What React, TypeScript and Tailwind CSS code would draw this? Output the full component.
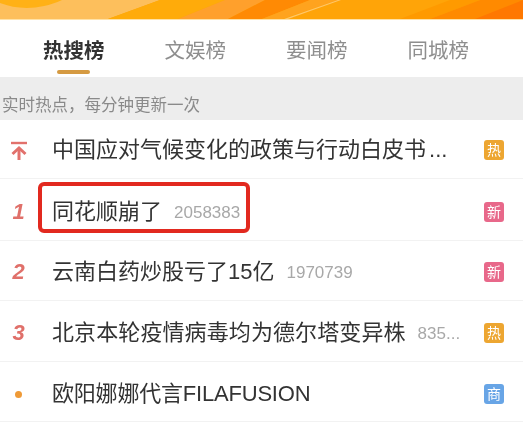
import React from 'react';

const FONT = '"Liberation Sans", "Noto Sans CJK SC", sans-serif';

type Row = {
  rank: 'top' | 'dot' | string;
  title: string;
  titleClass?: string;
  dots?: boolean;
  count?: string;
  tag: string;
  tagClass: string;
  box?: boolean;
  rowClass: string;
};

const rows: Row[] = [
  { rank: 'top', title: '中国应对气候变化的政策与行动白皮书', dots: true, tag: '热', tagClass: 'bg-[#eda631]', rowClass: 'h-[59px] pt-[2px]' },
  { rank: '1', title: '同花顺崩了', count: '2058383', tag: '新', tagClass: 'bg-[#e8688a]', box: true, rowClass: 'h-[62px] pt-[5px]' },
  { rank: '2', title: '云南白药炒股亏了15亿', count: '1970739', tag: '新', tagClass: 'bg-[#e8688a]', rowClass: 'h-[60px] pt-[3px]' },
  { rank: '3', title: '北京本轮疫情病毒均为德尔塔变异株', titleClass: 'tracking-[0.1px]', count: '835...', tag: '热', tagClass: 'bg-[#eda631]', rowClass: 'h-[61px] pt-[4px]' },
  { rank: 'dot', title: '欧阳娜娜代言FILAFUSION', titleClass: 'tracking-[-0.2px]', tag: '商', tagClass: 'bg-[#68a5e6]', rowClass: 'h-[60px] pt-[5px]' },
];

const tabs = ['热搜榜', '文娱榜', '要闻榜', '同城榜'];

function PinIcon() {
  return (
    <svg width="18" height="19" viewBox="0 0 18 19" fill="none" stroke="#e2716c" strokeWidth="3">
      <path d="M1 2h16" strokeWidth="2.4" />
      <path d="M9 19V8" />
      <path d="M2.5 13 9 7l6.5 6" />
    </svg>
  );
}

function Rank({ rank }: { rank: string }) {
  if (rank === 'top') return <PinIcon />;
  if (rank === 'dot') return <span className="block w-[7px] h-[7px] rounded-full bg-[#ef9a37]" />;
  return <span className="text-[22px] leading-none font-bold italic text-[#e0706a]">{rank}</span>;
}

export default function App() {
  return (
    <div className="w-[523px] h-[423px] overflow-hidden bg-white blur-[0.7px]" style={{ fontFamily: FONT }}>
      {/* Orange header strip */}
      <div className="h-[20px] overflow-hidden bg-[#ffa408] border-b border-[#ffe2a8]">
        <svg width="523" height="19" viewBox="0 0 523 19" className="block">
          <path d="M0 0h160L108 19H0z" fill="#fdbf5c" />
          <path d="M0 0h62C40 10 18 10 0 3z" fill="#ffb116" />
          <path d="M108 19 160 0h65l-47 19z" fill="#ffab0a" />
          <path d="M178 19 225 0h40l-37 19z" fill="#ffa02c" />
          <path d="M228 19 265 0h45l-48 19z" fill="#ff8a04" />
          <path d="M262 19 310 0h28L282 19z" fill="#ffa31e" />
          <path d="M284 19 338 0h3L288 19z" fill="#ffc66a" />
          <path d="M400 19 450 0h30L430 19z" fill="#ff9a00" />
          <path d="M430 19 480 0h43v19z" fill="#ff8a00" />
          <path d="M475 19 523 0v19z" fill="#ff7800" />
        </svg>
      </div>

      {/* Tabs */}
      <div className="h-[57px] flex pl-[43px] gap-[60px] text-[20.5px] leading-none text-[#8e8e8e]">
        {tabs.map((tab, i) => (
          <div key={tab} className="relative pt-[21px]">
            <span className={i === 0 ? 'font-bold text-[#333333]' : ''}>{tab}</span>
            {i === 0 && (
              <span className="absolute left-[14px] top-[50px] w-[33px] h-[4px] rounded-full bg-[#d59a42]" />
            )}
          </div>
        ))}
      </div>

      {/* Notice */}
      <div className="h-[43px] bg-[#ededed] pl-[2px] pt-[19px] text-[16.5px] leading-[18px] text-[#8a8a8a]">
        实时热点{'\uFF0C'}每分钟更新一次
      </div>

      {/* List */}
      {rows.map((row) => (
        <div key={row.title} className={`relative flex items-center border-b border-[#f2f2f2] ${row.rowClass}`}>
          <div className="w-[52px] shrink-0 flex justify-center pr-[15px]">
            <Rank rank={row.rank} />
          </div>
          <span className={`text-[22px] leading-none text-[#333333] whitespace-nowrap ${row.titleClass ?? ''}`}>{row.title}</span>
          {row.dots && <span className="ml-[3px] text-[22px] leading-none text-[#333333]">...</span>}
          {row.count && <span className="ml-[12px] text-[17px] leading-none text-[#a8a8a8]">{row.count}</span>}
          <span className={`ml-auto mr-[19px] w-[20px] h-[20px] rounded-[3px] flex items-center justify-center text-[14px] leading-none text-white ${row.tagClass}`}>
            {row.tag}
          </span>
          {row.box && (
            <span className="absolute left-[38px] top-[3px] w-[212px] h-[51px] rounded-[6px] border-4 border-[#e2291f]" />
          )}
        </div>
      ))}
    </div>
  );
}
